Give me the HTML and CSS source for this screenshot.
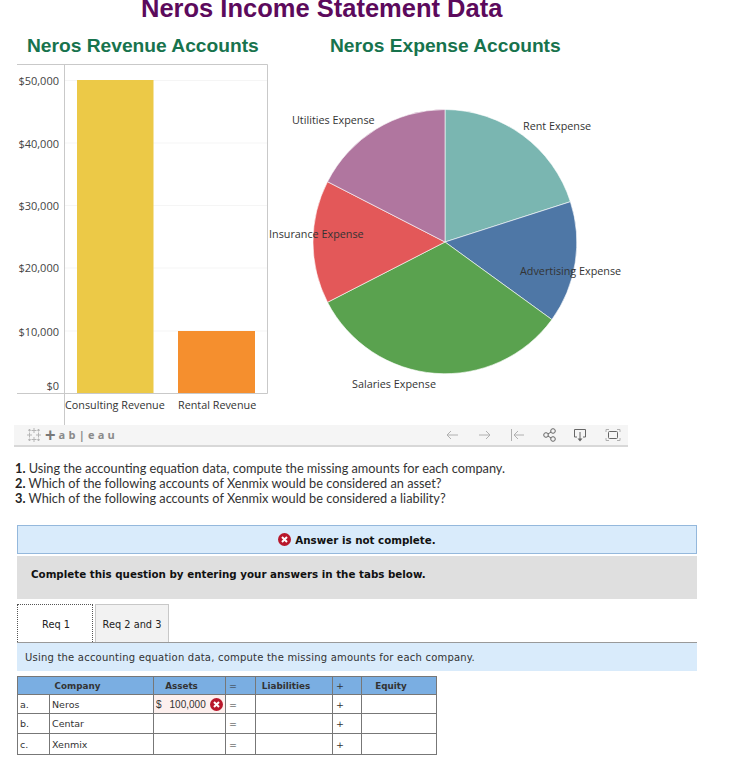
FILE: index.html
```html
<!DOCTYPE html>
<html lang="en">
<head>
<meta charset="utf-8">
<title>Neros Income Statement Data</title>
<link rel="stylesheet" href="styles.css">
</head>
<body>
<h1 class="main-title">Neros Income Statement Data</h1>
<div class="sub-titles">
  <h2 class="sub-title rev">Neros Revenue Accounts</h2>
  <h2 class="sub-title">Neros Expense Accounts</h2>
</div>
<div class="charts">
  <svg class="bar-chart" width="268" height="361" viewBox="0 64 268 361">
    <g class="grid">
      <path d="M65 80.5H267M65 143H267M65 205.5H267M65 268H267M65 331H267"/>
    </g>
    <rect x="77" y="80" width="76.5" height="313" fill="#ecc947"/>
    <rect x="178" y="331" width="77" height="62" fill="#f58f2e"/>
    <path class="axis" d="M17 64.5H267.5V393.5H17M64.5 64.5V425"/>
    <g class="val">
      <text x="59" y="85">$50,000</text>
      <text x="59" y="148">$40,000</text>
      <text x="59" y="210">$30,000</text>
      <text x="59" y="272">$20,000</text>
      <text x="59" y="336">$10,000</text>
      <text x="59" y="390">$0</text>
    </g>
    <text class="lbl" x="65" y="409">Consulting Revenue</text>
    <text class="lbl" x="178" y="409">Rental Revenue</text>
  </svg>
  <svg class="pie-chart" width="372" height="361" viewBox="268 64 372 361">
    <g class="slices">
      <path fill="#7ab6b1" d="M445 242V109.5A132.5 132.5 0 0 1 570.4 201.7Z"/>
      <path fill="#4e77a6" d="M445 242L570.4 201.7A132.5 132.5 0 0 1 551.9 319.6Z"/>
      <path fill="#5aa24f" d="M445 242L551.9 319.6A132.5 132.5 0 0 1 327.5 302.3Z"/>
      <path fill="#e35859" d="M445 242L327.5 302.3A132.5 132.5 0 0 1 327.5 181.7Z"/>
      <path fill="#b0769f" d="M445 242L327.5 181.7A132.5 132.5 0 0 1 445 109.5Z"/>
    </g>
    <text class="lbl" x="292" y="124">Utilities Expense</text>
    <text class="lbl" x="523" y="130">Rent Expense</text>
    <text class="lbl" x="269" y="238">Insurance Expense</text>
    <text class="lbl" x="520" y="275">Advertising Expense</text>
    <text class="lbl" x="352" y="388">Salaries Expense</text>
  </svg>
</div>
<div class="toolbar">
  <div class="logo">
    <svg width="14" height="14" viewBox="0 0 14 14"><path d="M7 0V5M4.5 2.5H9.5M7 9V14M4.5 11.5H9.5M0 7H5M2.5 4.5V9.5M9 7H14M11.5 4.5V9.5M2.5 1V3.5M1 2.2H4M11.5 1V3.5M10 2.2H13M2.5 10.5V13M1 11.8H4M11.5 10.5V13M10 11.8H13" fill="none" stroke="#b5b5b5" stroke-width="1"/></svg>
    <span class="logo-plus">+</span><span class="logo-word">a b | e a u</span>
  </div>
  <div class="tools">
    <svg width="14" height="14" viewBox="0 0 14 14"><path d="M13 7H2M6 3L2 7L6 11" class="ic pale"/></svg>
    <svg class="t1" width="14" height="14" viewBox="0 0 14 14"><path d="M1 7H12M8 3L12 7L8 11" class="ic pale"/></svg>
    <svg class="t2" width="14" height="14" viewBox="0 0 14 14"><path d="M1.500 1V13M14 7H4M8 3L4 7L8 11" class="ic pale"/></svg>
    <svg class="t3" width="14" height="14" viewBox="0 0 14 14"><circle cx="3" cy="7" r="2.300" class="ic"/><circle cx="10" cy="3" r="2.300" class="ic"/><circle cx="10" cy="11" r="2.300" class="ic"/><path d="M5 6L8 4M5 8L8 10" class="ic"/></svg>
    <svg class="t4" width="14" height="14" viewBox="0 0 14 14"><path d="M4 9H1.500V1.500H12.500V9H10M7 4V12" class="ic"/><path d="M4.500 10.500H9.500L7 13.500Z" fill="#666"/></svg>
    <svg class="t5" width="16" height="14" viewBox="0 0 16 14"><rect x="3.500" y="3.500" width="9" height="7" rx="1" class="ic"/><path d="M1 4V1.500H4M12 1.500H15V4M15 10V12.500H12M4 12.500H1V10" class="ic pale"/></svg>
  </div>
</div>
<ol class="questions">
  <li><b>1.</b> Using the accounting equation data, compute the missing amounts for each company.</li>
  <li><b>2.</b> Which of the following accounts of Xenmix would be considered an asset?</li>
  <li><b>3.</b> Which of the following accounts of Xenmix would be considered a liability?</li>
</ol>
<div class="answer-box">
  <svg class="err" width="13" height="13" viewBox="0 0 13 13"><circle cx="6.500" cy="6.500" r="6.500" fill="#b8172b"/><path d="M4 4L9 9M9 4L4 9" stroke="#fff" stroke-width="2"/></svg>
  <span>Answer is not complete.</span>
</div>
<div class="complete-box">Complete this question by entering your answers in the tabs below.</div>
<div class="tabs">
  <div class="tab active">Req 1</div>
  <div class="tab">Req 2 and 3</div>
</div>
<div class="instruction">Using the accounting equation data, compute the missing amounts for each company.</div>
<table class="eq">
  <colgroup>
    <col class="c1"><col class="c2"><col class="c3"><col class="c4"><col class="c5"><col class="c6"><col class="c7">
  </colgroup>
  <thead>
    <tr class="r0"><th colspan="2">Company</th><th>Assets</th><th class="op">=</th><th>Liabilities</th><th class="op">+</th><th>Equity</th></tr>
  </thead>
  <tbody>
    <tr class="r1"><td>a.</td><td>Neros</td><td class="wrong"><div class="amt"><span>$</span><span class="num">100,000</span><svg class="err" width="13" height="13" viewBox="0 0 13 13"><circle cx="6.500" cy="6.500" r="6.500" fill="#b8172b"/><path d="M4 4L9 9M9 4L4 9" stroke="#fff" stroke-width="2"/></svg></div></td><td class="op">=</td><td></td><td class="op">+</td><td></td></tr>
    <tr class="r2"><td>b.</td><td>Centar</td><td></td><td class="op">=</td><td></td><td class="op">+</td><td></td></tr>
    <tr class="r3"><td>c.</td><td>Xenmix</td><td></td><td class="op">=</td><td></td><td class="op">+</td><td></td></tr>
  </tbody>
</table>
</body>
</html>
```

FILE: styles.css
```css
* { box-sizing: border-box; }
html, body { margin: 0; padding: 0; background: #fff; overflow: hidden; }
body { width: 729px; height: 757px; font-family: "Liberation Sans", Arial, sans-serif; }

.main-title { margin: -7px 0 0; padding-left: 141px; font-size: 25.500px; line-height: 30px; font-weight: 700; color: #5c0a5c; white-space: nowrap; }
.sub-titles { display: flex; margin-top: 11px; padding-left: 27px; height: 24px; }
.sub-title { margin: 0; font-size: 19.200px; line-height: 24px; font-weight: 700; color: #17734d; white-space: nowrap; }
.sub-title.rev { width: 303px; }

.charts { display: flex; height: 361px; margin-top: 6px; }
.bar-chart, .pie-chart { display: block; flex: none; overflow: visible; }
.grid path { stroke: #f5f5f5; stroke-width: 1; fill: none; }
.axis { fill: none; stroke: #c9c9c9; stroke-width: 1; }
.val text { font-family: "Open Sans", sans-serif; font-size: 11px; fill: #444; text-anchor: end; }
.lbl { font-family: "Open Sans", sans-serif; font-size: 10.800px; fill: #333; }
.slices path { stroke: #fff; stroke-opacity: .6; stroke-width: 1; }

.toolbar { display: flex; justify-content: space-between; align-items: center; width: 614px; height: 22px; margin-left: 14px; padding: 0 7px 0 13px; background: #f5f5f5; border-bottom: 2px solid #d8d8d8; }
.logo { display: flex; align-items: center; }
.logo-plus { margin-left: 4px; font-size: 18px; line-height: 14px; font-weight: 700; color: #777; }
.logo-word { margin-left: 3px; font-family: "Open Sans", sans-serif; font-size: 11px; font-weight: 700; line-height: 14px; color: #8a8a8a; letter-spacing: .2px; }
.tools { display: flex; align-items: center; }
.tools svg { display: block; }
.tools .t1 { margin-left: 19px; }
.tools .t2 { margin-left: 17.500px; }
.tools .t3 { margin-left: 19px; }
.tools .t4 { margin-left: 16px; }
.tools .t5 { margin-left: 18.500px; }
.ic { fill: none; stroke: #666; stroke-width: 1; }
.ic.pale { stroke: #b0b0b0; }

.questions { list-style: none; margin: 14px 0 0 15px; padding: 0; font-family: Lato, sans-serif; font-size: 12.750px; line-height: 15px; color: #333; }
.questions b { color: #222; }

.answer-box { display: flex; align-items: center; justify-content: center; gap: 4px; width: 680px; height: 29px; margin: 19px 0 0 17px; background: #d9ebfb; border: 1px solid #94b8dc; font-family: "DejaVu Sans", sans-serif; font-size: 10.300px; font-weight: 700; color: #111; }
.complete-box { width: 680px; height: 43px; margin: 2px 0 0 17px; padding: 11px 0 0 14px; background: #dfdfdf; font-family: "DejaVu Sans", sans-serif; font-size: 10.300px; line-height: 14px; font-weight: 700; color: #111; }

.tabs { display: flex; gap: 2px; width: 680px; height: 39px; margin: 5px 0 0 17px; border-bottom: 1px solid #999; }
.tab { display: flex; align-items: center; justify-content: center; height: 38px; padding-top: 2px; font-family: "DejaVu Sans", sans-serif; font-size: 9.800px; color: #222; }
.tab { width: 74px; background: #f2f2f2; border: 1px solid #c8c8c8; border-bottom: 0; }
.tab.active { width: 76px; padding-left: 2px; background: #fff; border: 1px dotted #555; border-bottom: 0; }

.instruction { width: 680px; height: 28px; margin-left: 17px; padding-left: 8px; background: #d9ebfb; font-family: "DejaVu Sans", sans-serif; font-size: 10px; line-height: 30px; letter-spacing: .21px; color: #333; }

.eq { width: 420px; margin: 5px 0 0 17px; border-collapse: collapse; table-layout: fixed; font-family: "DejaVu Sans", sans-serif; font-size: 9.500px; color: #333; }
.eq th, .eq td { border: 1px solid #777; padding: 0 2px; }
.eq th { background: #7aaee2; font-weight: 700; text-align: center; font-size: 8.800px; color: #333; padding-right: 18px; }
.eq .op { text-align: left; padding-left: 3px; padding-right: 2px; font-weight: 400; font-size: 9.500px; }
.c1 { width: 32px; } .c2 { width: 104px; } .c3 { width: 72px; } .c4 { width: 30px; } .c5 { width: 77px; } .c6 { width: 29px; } .c7 { width: 75px; }
.r0 { height: 18px; } .r1 { height: 19px; } .r2 { height: 20px; } .r3 { height: 21px; }
.wrong { background: #fdf0ee; }
.amt { display: flex; align-items: center; font-family: "Liberation Sans", sans-serif; font-size: 10px; }
.num { margin-left: 8px; margin-right: 4px; }
.amt .err { flex: none; }
```
